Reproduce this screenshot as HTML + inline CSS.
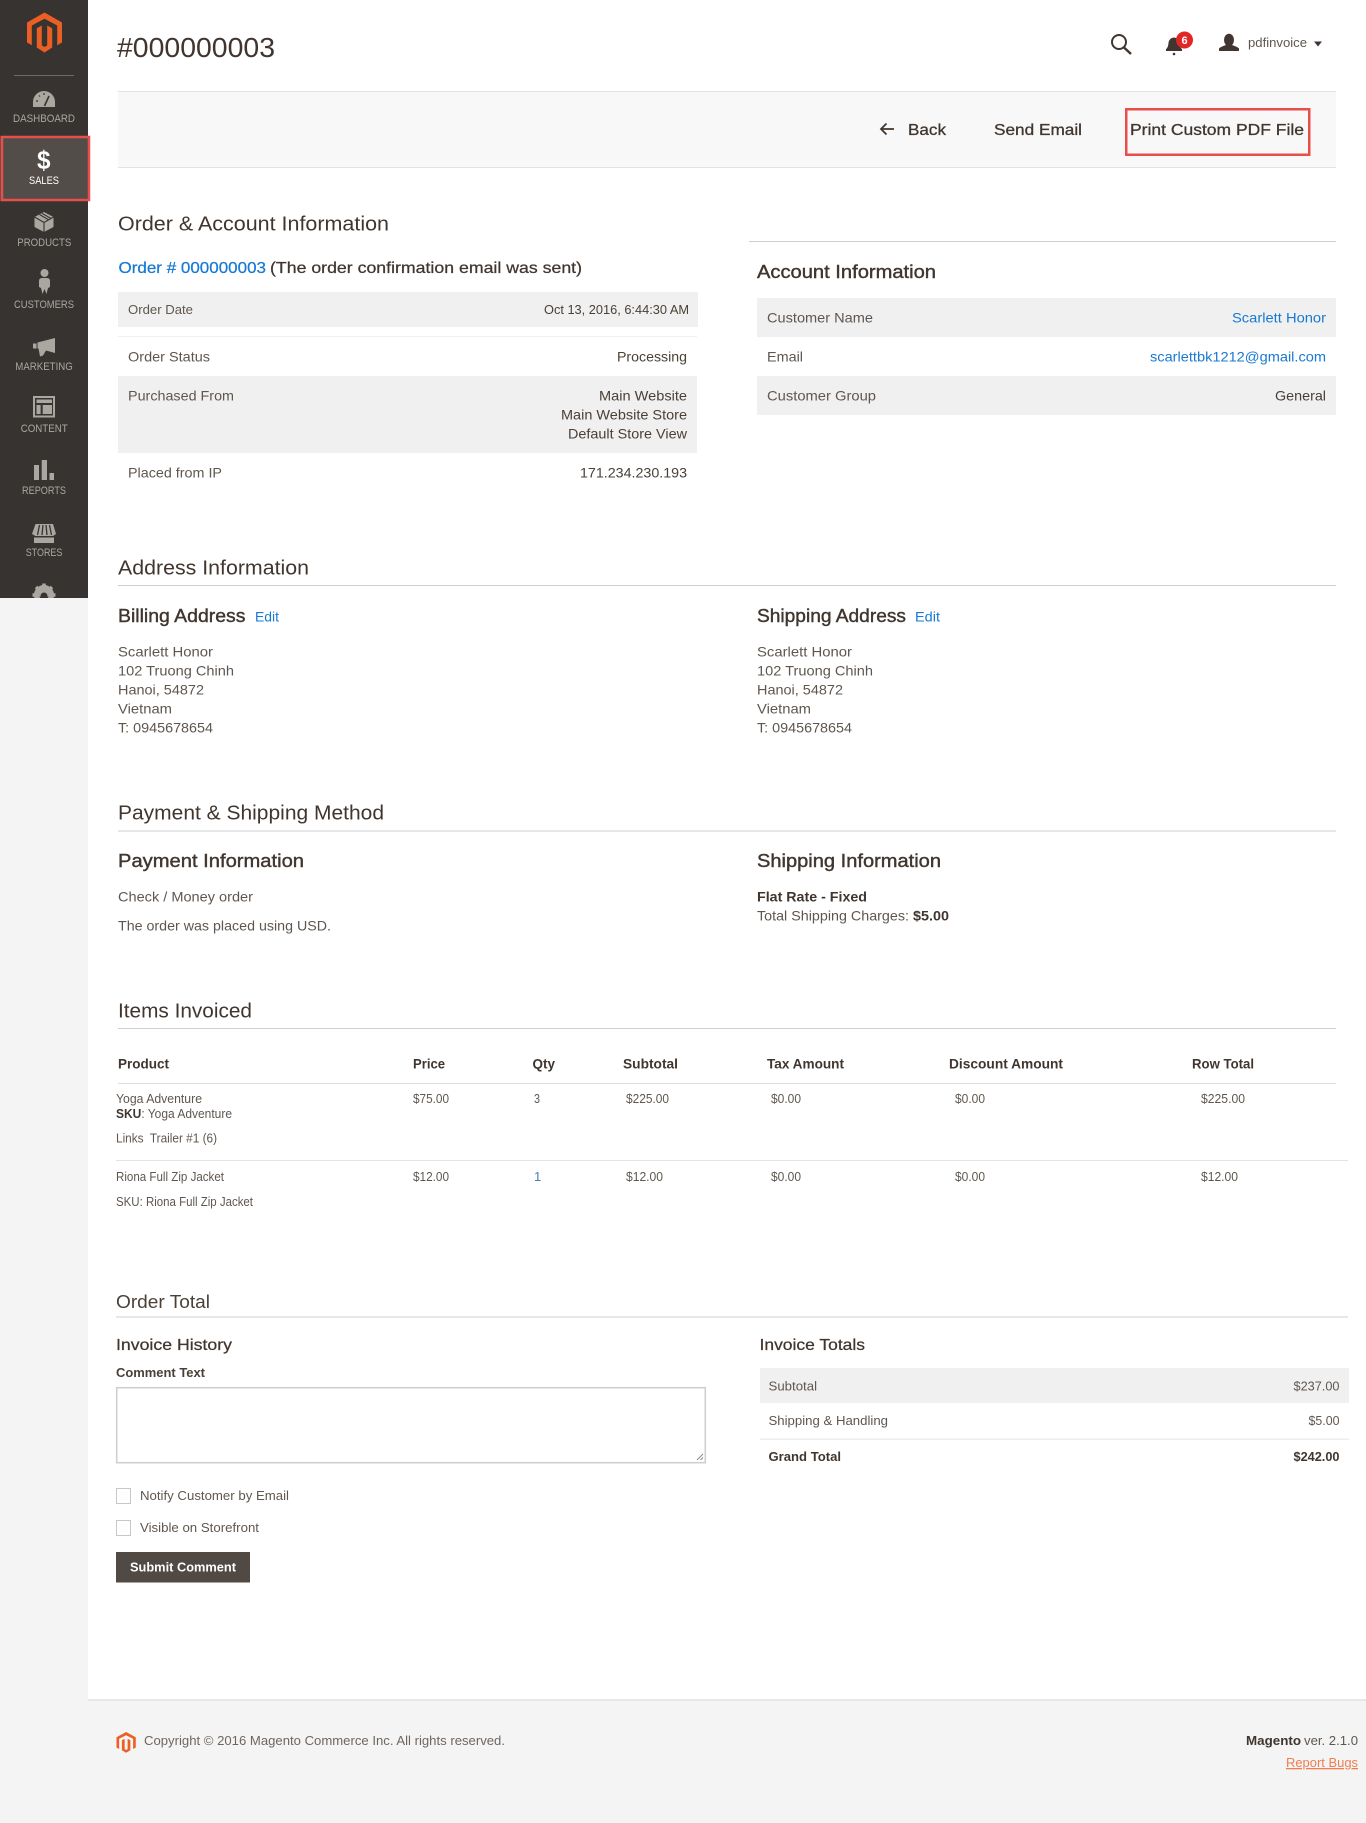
<!DOCTYPE html>
<html lang="en"><head><meta charset="utf-8"><title>#000000003</title>
<style>
html,body{margin:0;padding:0;background:#fff;width:1366px;height:1823px;overflow:hidden}
svg{display:block}
text{font-family:"Liberation Sans",sans-serif;font-size:14px;fill:#5f574f;white-space:pre}
.nav{font-size:11px;fill:#aaa6a0}
.sec{font-size:20px;fill:#41362f}
.sub{font-size:18px;fill:#41362f;stroke:#41362f;stroke-width:.4px}
.sub2{font-size:16px;fill:#41362f;stroke:#41362f;stroke-width:.25px}
.act{font-size:16px;fill:#41362f;stroke:#41362f;stroke-width:.3px}
.lnk{fill:#1979d2}
.dk{fill:#4a4037}
.b{font-weight:bold;fill:#41362f}
.s{font-size:13px}
.ic{fill:#aaa6a0}
.ln{fill:#cfcfcf}
.gr{fill:#f0f0f0}
</style></head><body>
<svg xmlns="http://www.w3.org/2000/svg" width="1366" height="1823" viewBox="0 0 1366 1823">
<defs><clipPath id="sb"><rect x="0" y="0" width="88" height="598"/></clipPath></defs>
<rect width="1366" height="1823" fill="#fff"/>
<!-- sidebar -->
<rect x="0" y="0" width="88" height="1823" fill="#f4f4f4"/>
<rect x="0" y="0" width="88" height="598" fill="#373330"/>
<g transform="translate(27,12.500)" fill="#eb5f25">
<path d="M17.500 0L35 10V30L30.200 32.800V13L17.500 6.300L4.800 13V32.800L0 30V10Z"/>
<path d="M9.800 15.800L14.800 13V33L17.500 34.500L20.200 33V13L25.200 15.800V35L17.500 40L9.800 35Z"/>
</g>
<rect x="14" y="75" width="60" height="1" fill="#6e6a66"/>
<path class="ic" d="M33 107V102A11 11 0 0 1 55 102V107Z"/>
<path d="M44.500 106L49 96" stroke="#373330" stroke-width="1.600"/>
<path d="M36 101h2M39 95.500l1 1M44 93v2" stroke="#373330" stroke-width="1.200"/>
<text class="nav" x="13" y="122" textLength="62" lengthAdjust="spacingAndGlyphs">DASHBOARD</text>
<rect x="0" y="136" width="88" height="65" fill="#524d49"/>
<rect x="2" y="137" width="87" height="63" fill="none" stroke="#e84f4a" stroke-width="2.500"/>
<text x="37" y="169" style="font-size:26px;font-weight:bold;fill:#fff" textLength="13.500" lengthAdjust="spacingAndGlyphs">$</text>
<text class="nav" style="fill:#fff" x="29" y="184" textLength="30" lengthAdjust="spacingAndGlyphs">SALES</text>
<g transform="translate(-1,0)">
<path class="ic" d="M45 212L54.500 217V227L45 232L35.500 227V217Z"/>
<path d="M35.500 217L45 222.500L54.500 217M45 222.500V232M40.500 214.500L50 220M43 213.300L52 218.500" stroke="#373330" stroke-width="1.100" fill="none"/>
<circle class="ic" cx="45.500" cy="273" r="4"/>
<path class="ic" d="M40 281Q40 278 43 278H48Q51 278 51 281V287L49 288L47.500 294L45.500 289L43.500 294L42 288L40 287Z"/>
<path class="ic" d="M34 343.500H37.500V348.500H34ZM38.500 342.500L56 338V353L47 350.500L44 355.500L41 356.500L39.500 348.500H38.500Z"/>
<rect x="35" y="397" width="20" height="19.500" fill="none" stroke="#aaa6a0" stroke-width="2"/>
<path class="ic" d="M37.500 399.500H53V403H37.500ZM37.500 405H41.600V414H37.500ZM43.700 405H53V414H43.700Z"/>
<path class="ic" d="M35 465H40V480H35ZM42.700 460H48V480H42.700ZM50.500 473H55V480H50.500Z"/>
<path class="ic" d="M36.500 524H54L57 534L54 536H36.500L33 534Z"/>
<path d="M40.500 525L38.500 535M44 525L43 535M47 525L48 535M50.500 525L52.500 535" stroke="#373330" stroke-width="1.300"/>
<path class="ic" d="M35 537.500H55V543H35Z"/>
</g>
<text class="nav" x="17.300" y="246" textLength="54" lengthAdjust="spacingAndGlyphs">PRODUCTS</text>
<text class="nav" x="14" y="308" textLength="60" lengthAdjust="spacingAndGlyphs">CUSTOMERS</text>
<text class="nav" x="15.300" y="370" textLength="57.500" lengthAdjust="spacingAndGlyphs">MARKETING</text>
<text class="nav" x="20.700" y="432" textLength="47" lengthAdjust="spacingAndGlyphs">CONTENT</text>
<text class="nav" x="22" y="494" textLength="44" lengthAdjust="spacingAndGlyphs">REPORTS</text>
<text class="nav" x="25.700" y="556" textLength="36.700" lengthAdjust="spacingAndGlyphs">STORES</text>
<g clip-path="url(#sb)">
<circle cx="44" cy="595" r="7.500" fill="none" stroke="#aaa6a0" stroke-width="5"/>
<path d="M44 595V583.500M44 595L36 587M44 595L52 587M44 595H32.500M44 595H55.500" stroke="#aaa6a0" stroke-width="3.500"/>
<circle cx="44" cy="596" r="3.500" fill="#373330"/>
</g>
<!-- header -->
<text x="117" y="57" style="font-size:28px;fill:#41362f" textLength="158" lengthAdjust="spacingAndGlyphs">#000000003</text>
<circle cx="1119" cy="42" r="7" fill="none" stroke="#41362f" stroke-width="2"/>
<path d="M1124 47.500L1131 54" stroke="#41362f" stroke-width="2.400"/>
<path d="M1166 51V49Q1168 48 1168.500 43Q1169 38 1174 37.500Q1179 38 1179.500 43Q1180 48 1182 49V51Z" fill="#41362f"/>
<circle cx="1174" cy="54" r="1.300" fill="#41362f"/>
<circle cx="1184.500" cy="40" r="8.500" fill="#e22626"/>
<text x="1181.500" y="44" style="font-size:11px;font-weight:bold;fill:#fff">6</text>
<ellipse cx="1229" cy="40" rx="5" ry="6.300" fill="#41362f"/>
<path d="M1219 51V48.500Q1220 47 1226 45H1232Q1238 47 1239 48.500V51Z" fill="#41362f"/>
<text x="1248" y="47" style="font-size:13px" textLength="59" lengthAdjust="spacingAndGlyphs">pdfinvoice</text>
<path d="M1314 41.500H1322L1318 46.500Z" fill="#41362f"/>
<!-- toolbar -->
<rect x="118" y="91" width="1218" height="77" fill="#f8f8f8"/>
<rect x="118" y="91" width="1218" height="1" fill="#e3e3e3"/>
<rect x="118" y="167" width="1218" height="1" fill="#e3e3e3"/>
<path d="M894 129H881.500M886.500 123.500L881 129L886.500 134.500" fill="none" stroke="#41362f" stroke-width="1.800"/>
<text class="act" x="908" y="135" textLength="38" lengthAdjust="spacingAndGlyphs">Back</text>
<text class="act" x="994" y="135" textLength="88" lengthAdjust="spacingAndGlyphs">Send Email</text>
<text class="act" x="1130" y="135" textLength="174" lengthAdjust="spacingAndGlyphs">Print Custom PDF File</text>
<rect x="1126.250" y="109.250" width="183" height="45.500" fill="none" stroke="#e84f4a" stroke-width="2.500"/>
<!-- order & account -->
<text class="sec" x="118" y="230.500" textLength="271" lengthAdjust="spacingAndGlyphs">Order &amp; Account Information</text>
<text class="sub2 lnk" style="fill:#1979d2;stroke:#1979d2" x="118.500" y="273" textLength="147.500" lengthAdjust="spacingAndGlyphs">Order # 000000003</text>
<text class="sub2" x="270" y="273" textLength="312" lengthAdjust="spacingAndGlyphs">(The order confirmation email was sent)</text>
<rect class="gr" x="118" y="292" width="580" height="35"/>
<text class="s" x="128" y="314" textLength="65" lengthAdjust="spacingAndGlyphs">Order Date</text>
<text class="s dk" x="544" y="314" textLength="145" lengthAdjust="spacingAndGlyphs">Oct 13, 2016, 6:44:30 AM</text>
<rect x="118" y="336" width="579" height="1" fill="#efefef"/>
<text x="128" y="361.500" textLength="82" lengthAdjust="spacingAndGlyphs">Order Status</text>
<text class="dk" x="617" y="361.500" textLength="70" lengthAdjust="spacingAndGlyphs">Processing</text>
<rect class="gr" x="118" y="376" width="579" height="77"/>
<text x="128" y="400.500" textLength="106" lengthAdjust="spacingAndGlyphs">Purchased From</text>
<text class="dk" x="599" y="400.500" textLength="88" lengthAdjust="spacingAndGlyphs">Main Website</text>
<text class="dk" x="561" y="419.500" textLength="126" lengthAdjust="spacingAndGlyphs">Main Website Store</text>
<text class="dk" x="568" y="438.500" textLength="119" lengthAdjust="spacingAndGlyphs">Default Store View</text>
<text x="128" y="477.500" textLength="94" lengthAdjust="spacingAndGlyphs">Placed from IP</text>
<text class="dk" x="580" y="477.500" textLength="107" lengthAdjust="spacingAndGlyphs">171.234.230.193</text>
<rect class="ln" x="749" y="241" width="587" height="1"/>
<text class="sub" x="757" y="278" textLength="179" lengthAdjust="spacingAndGlyphs">Account Information</text>
<rect class="gr" x="757" y="298" width="579" height="39"/>
<rect class="gr" x="757" y="376" width="579" height="39"/>
<text x="767" y="322.500" textLength="106" lengthAdjust="spacingAndGlyphs">Customer Name</text>
<text class="lnk" x="1232" y="322.500" textLength="94" lengthAdjust="spacingAndGlyphs">Scarlett Honor</text>
<text x="767" y="361.500" textLength="36" lengthAdjust="spacingAndGlyphs">Email</text>
<text class="lnk" x="1150" y="361.500" textLength="176" lengthAdjust="spacingAndGlyphs">scarlettbk1212@gmail.com</text>
<text x="767" y="400.500" textLength="109" lengthAdjust="spacingAndGlyphs">Customer Group</text>
<text class="dk" x="1275" y="400.500" textLength="51" lengthAdjust="spacingAndGlyphs">General</text>
<!-- address -->
<text class="sec" x="118" y="574.500" textLength="191" lengthAdjust="spacingAndGlyphs">Address Information</text>
<rect class="ln" x="118" y="585" width="1218" height="1"/>
<text class="sub" x="118" y="622" textLength="127.500" lengthAdjust="spacingAndGlyphs">Billing Address</text>
<text class="lnk" x="255" y="621.500" textLength="24" lengthAdjust="spacingAndGlyphs">Edit</text>
<text x="118" y="656.500" textLength="95" lengthAdjust="spacingAndGlyphs">Scarlett Honor</text>
<text x="118" y="675.500" textLength="116" lengthAdjust="spacingAndGlyphs">102 Truong Chinh</text>
<text x="118" y="694.500" textLength="86" lengthAdjust="spacingAndGlyphs">Hanoi, 54872</text>
<text x="118" y="713.500" textLength="54" lengthAdjust="spacingAndGlyphs">Vietnam</text>
<text x="118" y="732.500" textLength="95" lengthAdjust="spacingAndGlyphs">T: 0945678654</text>
<text class="sub" x="757" y="622" textLength="149" lengthAdjust="spacingAndGlyphs">Shipping Address</text>
<text class="lnk" x="915" y="621.500" textLength="25" lengthAdjust="spacingAndGlyphs">Edit</text>
<text x="757" y="656.500" textLength="95" lengthAdjust="spacingAndGlyphs">Scarlett Honor</text>
<text x="757" y="675.500" textLength="116" lengthAdjust="spacingAndGlyphs">102 Truong Chinh</text>
<text x="757" y="694.500" textLength="86" lengthAdjust="spacingAndGlyphs">Hanoi, 54872</text>
<text x="757" y="713.500" textLength="54" lengthAdjust="spacingAndGlyphs">Vietnam</text>
<text x="757" y="732.500" textLength="95" lengthAdjust="spacingAndGlyphs">T: 0945678654</text>
<!-- payment -->
<text class="sec" x="118" y="819.500" textLength="266" lengthAdjust="spacingAndGlyphs">Payment &amp; Shipping Method</text>
<rect class="ln" x="118" y="830.500" width="1218" height="1"/>
<text class="sub" x="118" y="867" textLength="186" lengthAdjust="spacingAndGlyphs">Payment Information</text>
<text class="sub" x="757" y="867" textLength="184" lengthAdjust="spacingAndGlyphs">Shipping Information</text>
<text x="118" y="901.500" textLength="135" lengthAdjust="spacingAndGlyphs">Check / Money order</text>
<text x="118" y="930.500" textLength="213" lengthAdjust="spacingAndGlyphs">The order was placed using USD.</text>
<text class="b" x="757" y="901.500" textLength="110" lengthAdjust="spacingAndGlyphs">Flat Rate - Fixed</text>
<text x="757" y="920.500" textLength="152" lengthAdjust="spacingAndGlyphs">Total Shipping Charges:</text>
<text class="b" x="913" y="920.500" textLength="36" lengthAdjust="spacingAndGlyphs">$5.00</text>
<!-- items -->
<text class="sec" x="118" y="1017.500" textLength="134" lengthAdjust="spacingAndGlyphs">Items Invoiced</text>
<rect class="ln" x="118" y="1028" width="1218" height="1"/>
<text class="b" x="118" y="1068.500" textLength="51" lengthAdjust="spacingAndGlyphs">Product</text>
<text class="b" x="413" y="1068.500" textLength="32" lengthAdjust="spacingAndGlyphs">Price</text>
<text class="b" x="532.500" y="1068.500" textLength="22.500" lengthAdjust="spacingAndGlyphs">Qty</text>
<text class="b" x="623" y="1068.500" textLength="55" lengthAdjust="spacingAndGlyphs">Subtotal</text>
<text class="b" x="767" y="1068.500" textLength="77" lengthAdjust="spacingAndGlyphs">Tax Amount</text>
<text class="b" x="949" y="1068.500" textLength="114" lengthAdjust="spacingAndGlyphs">Discount Amount</text>
<text class="b" x="1192" y="1068.500" textLength="62" lengthAdjust="spacingAndGlyphs">Row Total</text>
<rect x="118" y="1083" width="1218" height="1" fill="#dfdfdf"/>
<text class="s" x="116" y="1103" textLength="86" lengthAdjust="spacingAndGlyphs">Yoga Adventure</text>
<text class="s" x="116" y="1118" textLength="116" lengthAdjust="spacingAndGlyphs"><tspan class="b">SKU</tspan>: Yoga Adventure</text>
<text class="s" x="116" y="1142.500" textLength="101" lengthAdjust="spacingAndGlyphs">Links  Trailer #1 (6)</text>
<text class="s" x="413" y="1103" textLength="36" lengthAdjust="spacingAndGlyphs">$75.00</text>
<text class="s" x="534" y="1103" textLength="6" lengthAdjust="spacingAndGlyphs">3</text>
<text class="s" x="626" y="1103" textLength="43" lengthAdjust="spacingAndGlyphs">$225.00</text>
<text class="s" x="771" y="1103" textLength="30" lengthAdjust="spacingAndGlyphs">$0.00</text>
<text class="s" x="955" y="1103" textLength="30" lengthAdjust="spacingAndGlyphs">$0.00</text>
<text class="s" x="1201" y="1103" textLength="44" lengthAdjust="spacingAndGlyphs">$225.00</text>
<rect x="116" y="1160" width="1232" height="1" fill="#e3e3e3"/>
<text class="s" x="116" y="1181" textLength="108" lengthAdjust="spacingAndGlyphs">Riona Full Zip Jacket</text>
<text class="s" x="413" y="1181" textLength="36" lengthAdjust="spacingAndGlyphs">$12.00</text>
<text class="s" x="534" y="1181" style="fill:#4a7fb0">1</text>
<text class="s" x="626" y="1181" textLength="37" lengthAdjust="spacingAndGlyphs">$12.00</text>
<text class="s" x="771" y="1181" textLength="30" lengthAdjust="spacingAndGlyphs">$0.00</text>
<text class="s" x="955" y="1181" textLength="30" lengthAdjust="spacingAndGlyphs">$0.00</text>
<text class="s" x="1201" y="1181" textLength="37" lengthAdjust="spacingAndGlyphs">$12.00</text>
<text class="s" x="116" y="1206" textLength="137" lengthAdjust="spacingAndGlyphs">SKU: Riona Full Zip Jacket</text>
<!-- order total -->
<text class="dk" style="font-size:18px" x="116" y="1308" textLength="94" lengthAdjust="spacingAndGlyphs">Order Total</text>
<rect class="ln" x="116" y="1316.500" width="1232" height="1"/>
<text class="sub2" x="116" y="1350" textLength="116" lengthAdjust="spacingAndGlyphs">Invoice History</text>
<text class="sub2" x="759.500" y="1350" textLength="105.500" lengthAdjust="spacingAndGlyphs">Invoice Totals</text>
<text class="s dk" style="font-weight:bold" x="116" y="1377" textLength="89" lengthAdjust="spacingAndGlyphs">Comment Text</text>
<rect x="116.700" y="1387.700" width="588.600" height="75" fill="#fff" stroke="#cdcdcd" stroke-width="1.500"/>
<path d="M697 1460L703 1454M700.500 1460L703 1457.500" stroke="#8a8a8a" stroke-width="1"/>
<rect x="116.500" y="1488.500" width="14" height="15" fill="#fff" stroke="#c8c8c8"/>
<text class="s" x="140" y="1500" textLength="149" lengthAdjust="spacingAndGlyphs">Notify Customer by Email</text>
<rect x="116.500" y="1520.500" width="14" height="15" fill="#fff" stroke="#c8c8c8"/>
<text class="s" x="140" y="1532" textLength="119" lengthAdjust="spacingAndGlyphs">Visible on Storefront</text>
<rect x="116" y="1552" width="134" height="30.500" fill="#514943"/>
<text class="s" style="font-weight:bold;fill:#fff" x="130" y="1571.500" textLength="106" lengthAdjust="spacingAndGlyphs">Submit Comment</text>
<rect class="gr" x="760" y="1368" width="589" height="35"/>
<text class="s" x="768.500" y="1390.500" textLength="48.500" lengthAdjust="spacingAndGlyphs">Subtotal</text>
<text class="s" x="1293.500" y="1390.500" textLength="46" lengthAdjust="spacingAndGlyphs">$237.00</text>
<text class="s" x="768.500" y="1425" textLength="119.500" lengthAdjust="spacingAndGlyphs">Shipping &amp; Handling</text>
<text class="s" x="1308.500" y="1425" textLength="31" lengthAdjust="spacingAndGlyphs">$5.00</text>
<rect x="760" y="1438.500" width="589" height="1.500" fill="#eee"/>
<text class="s b" x="768.500" y="1461" textLength="72.500" lengthAdjust="spacingAndGlyphs">Grand Total</text>
<text class="s b" x="1293.500" y="1461" textLength="46" lengthAdjust="spacingAndGlyphs">$242.00</text>
<!-- footer -->
<rect x="88" y="1700" width="1278" height="123" fill="#f4f4f4"/>
<rect x="88" y="1699" width="1278" height="2" fill="#e8e8e8"/>
<g transform="translate(116.500,1732) scale(.55,.52)" fill="#eb5f25">
<path d="M17.500 0L35 10V30L30.200 32.800V13L17.500 6.300L4.800 13V32.800L0 30V10Z"/>
<path d="M9.800 15.800L14.800 13V33L17.500 34.500L20.200 33V13L25.200 15.800V35L17.500 40L9.800 35Z"/>
</g>
<text class="s" style="fill:#6f675f" x="144" y="1745" textLength="361" lengthAdjust="spacingAndGlyphs">Copyright © 2016 Magento Commerce Inc. All rights reserved.</text>
<text class="s b" x="1246" y="1745" textLength="55" lengthAdjust="spacingAndGlyphs">Magento</text>
<text class="s" x="1304" y="1745" textLength="54" lengthAdjust="spacingAndGlyphs">ver. 2.1.0</text>
<text class="s" style="fill:#f07d50;text-decoration:underline" x="1286" y="1767" textLength="72" lengthAdjust="spacingAndGlyphs">Report Bugs</text>
</svg>
</body></html>
